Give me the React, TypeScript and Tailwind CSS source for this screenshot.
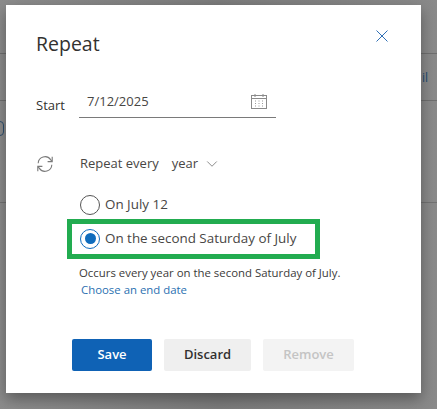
import { ChevronDown } from "lucide-react";

const font = { fontFamily: '"Open Sans", "Noto Sans", sans-serif' };

function CalendarIcon() {
  return (
    <svg width="18" height="17" viewBox="0 0 18 17" fill="none" stroke="#8a8a8a" strokeWidth="1">
      <rect x="1.5" y="2.5" width="15" height="13" />
      <path d="M1.5 5.5h15M5 1v3M13 1v3" />
      <path d="M5 8h1M8.5 8h1M12 8h1M5 10.5h1M8.5 10.5h1M12 10.5h1M5 13h1M8.5 13h1M12 13h1" stroke="#999" />
    </svg>
  );
}

function RepeatIcon() {
  return (
    <svg width="18" height="18" viewBox="0 0 18 18" fill="none" stroke="#7a7a7a" strokeWidth="1.1">
      <path d="M2.2 8.2A6.8 6.8 0 0 1 14.6 4.6L16 6.4" />
      <path d="M16.2 1.8V6.6H11.6" />
      <path d="M15.8 9.8A6.8 6.8 0 0 1 3.4 13.4L2 11.6" />
      <path d="M1.8 16.2V11.4H6.4" />
    </svg>
  );
}

function Radio({ checked }: { checked?: boolean }) {
  return (
    <span
      className={
        "flex h-5 w-5 items-center justify-center rounded-full border bg-white " +
        (checked ? "border-[#0f6cbd]" : "border-[#555]")
      }
    >
      {checked && <span className="h-[11px] w-[11px] rounded-full bg-[#0f6cbd]" />}
    </span>
  );
}

export default function App() {
  return (
    <div
      className="relative h-[409px] w-[437px] overflow-hidden bg-gradient-to-r from-[#8c8c8c] via-[#7c7c7c] to-[#8a8a8a] pl-[6px] pt-[5px]"
      style={font}
    >
      {/* what shows of the page behind the dialog */}
      <div className="absolute left-0 top-[53px] h-px w-[437px] bg-[#6f6f6f]" />
      <div className="absolute left-0 top-[100px] h-px w-[437px] bg-[#6f6f6f]" />
      <div className="absolute left-0 top-[202px] h-px w-[437px] bg-[#727272]" />
      <div className="absolute left-[422px] top-[70px] text-[12px] leading-4 text-[#1e4a70]">il</div>
      <div className="absolute left-[-4px] top-[121px] h-[15px] w-[8px] rounded-full border border-[#2c4f6e]" />

      <div className="relative flex h-[388px] w-[415px] flex-col bg-white pl-[30px] pr-[32px] shadow-[0_6px_14px_rgba(0,0,0,0.35)]">
        <div className="flex items-start justify-between pt-[22px]">
          <h1 className="text-[19.5px] leading-[34px] text-[#323130]">Repeat</h1>
          <svg className="mt-[2px]" width="14" height="14" viewBox="0 0 14 14" fill="none" stroke="#2f6fb5" strokeWidth="1">
            <path d="M1.5 1.5l11 11M12.5 1.5l-11 11" />
          </svg>
        </div>

        <div className="mt-[24px] flex items-center">
          <span className="w-[43px] pt-[8px] text-[13px] text-[#323130]">Start</span>
          <div className="flex h-[33px] w-[197px] items-center justify-between border-b border-[#7a7a7a] pl-2 pr-[8px]">
            <span className="pt-[2px] text-[13px] text-[#484644]">7/12/2025</span>
            <CalendarIcon />
          </div>
        </div>

        <div className="mt-[36px] flex items-center">
          <RepeatIcon />
          <span className="ml-[26px] text-[13px] text-[#484644]">Repeat every</span>
          <span className="ml-[13px] text-[13px] text-[#484644]">year</span>
          <ChevronDown className="ml-[5px] h-[18px] w-[18px] text-[#666]" strokeWidth={1} />
        </div>

        <div className="mt-[21px] flex flex-col">
          <label className="ml-[44px] flex h-[20px] items-center gap-[5px] text-[13.4px] text-[#484644]">
            <Radio />
            On July 12
          </label>
          <label className="ml-[31px] mt-[4px] flex h-[40px] w-[253px] items-center gap-[5px] border-[5px] border-[#22ac50] pl-[8px] text-[13.4px] text-[#484644]">
            <Radio checked />
            On the second Saturday of July
          </label>
          <p className="ml-[43px] mt-[5px] text-[11.4px] leading-[17px] text-[#3b3a39]">
            Occurs every year on the second Saturday of July.
          </p>
          <a className="ml-[45px] text-[11.4px] leading-[18px] text-[#2a6fb0]">Choose an end date</a>
        </div>

        <div className="ml-[36px] mt-[40px] flex gap-[12px]">
          <button className="h-[32px] w-[80px] rounded-[2px] bg-[#0f62b5] text-[13px] font-semibold text-white">Save</button>
          <button className="h-[32px] w-[87px] rounded-[2px] bg-[#efefef] text-[13px] font-semibold text-[#323130]">Discard</button>
          <button className="h-[32px] w-[91px] rounded-[2px] bg-[#f3f3f3] text-[13px] font-semibold text-[#c4c4c4]">Remove</button>
        </div>
      </div>
    </div>
  );
}
